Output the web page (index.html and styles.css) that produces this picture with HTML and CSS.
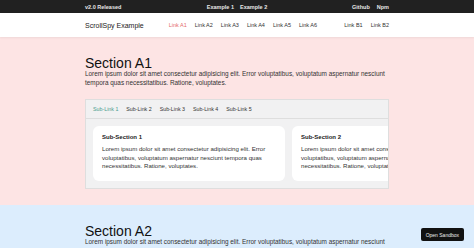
FILE: index.html
```html
<!DOCTYPE html>
<html lang="en">
<head>
    <meta charset="UTF-8">
    <meta name="viewport" content="width=device-width, initial-scale=1.0">
    <title>ScrollSpy Example</title>
    <link rel="stylesheet" href="styles.css">
</head>
<body>

    <div class="topbar">
        <div class="container topbar-inner">
            <div class="topbar-left">v2.0 Released</div>
            <div class="topbar-center">
                <a href="#">Example 1</a>
                <a href="#">Example 2</a>
            </div>
            <div class="topbar-right">
                <a href="#">Github</a>
                <a href="#">Npm</a>
            </div>
        </div>
    </div>

    <nav class="navbar">
        <div class="container navbar-inner">
            <span class="brand">ScrollSpy Example</span>
            <ul class="nav-links">
                <li><a href="#a1" class="active">Link A1</a></li>
                <li><a href="#a2">Link A2</a></li>
                <li><a href="#a3">Link A3</a></li>
                <li><a href="#a4">Link A4</a></li>
                <li><a href="#a5">Link A5</a></li>
                <li><a href="#a6">Link A6</a></li>
            </ul>
            <ul class="nav-links nav-right">
                <li><a href="#b1">Link B1</a></li>
                <li><a href="#b2">Link B2</a></li>
            </ul>
        </div>
    </nav>

    <section class="section section-pink" id="a1">
        <div class="container">
            <h1>Section A1</h1>
            <p>Lorem ipsum dolor sit amet consectetur adipisicing elit. Error voluptatibus, voluptatum aspernatur nesciunt tempora quas necessitatibus. Ratione, voluptates.</p>

            <div class="subspy">
                <ul class="sub-links">
                    <li><a href="#s1" class="active">Sub-Link 1</a></li>
                    <li><a href="#s2">Sub-Link 2</a></li>
                    <li><a href="#s3">Sub-Link 3</a></li>
                    <li><a href="#s4">Sub-Link 4</a></li>
                    <li><a href="#s5">Sub-Link 5</a></li>
                </ul>
                <div class="cards">
                    <div class="card" id="s1">
                        <h3>Sub-Section 1</h3>
                        <p>Lorem ipsum dolor sit amet consectetur adipisicing elit. Error voluptatibus, voluptatum aspernatur nesciunt tempora quas necessitatibus. Ratione, voluptates.</p>
                    </div>
                    <div class="card" id="s2">
                        <h3>Sub-Section 2</h3>
                        <p>Lorem ipsum dolor sit amet consectetur adipisicing elit. Error voluptatibus, voluptatum aspernatur nesciunt tempora quas necessitatibus. Ratione, voluptates.</p>
                    </div>
                </div>
            </div>
        </div>
    </section>

    <section class="section section-blue" id="a2">
        <div class="container">
            <h1>Section A2</h1>
            <p>Lorem ipsum dolor sit amet consectetur adipisicing elit. Error voluptatibus, voluptatum aspernatur nesciunt tempora quas necessitatibus. Ratione, voluptates.</p>
        </div>
    </section>

    <button class="sandbox-btn">Open Sandbox</button>

</body>
</html>
```

FILE: styles.css
```css
body {
    font-family: 'Liberation Sans', Arial, Helvetica, sans-serif;
    margin: 0;
    color: #222;
    background-color: #dcedfd;
}
a {
    color: inherit;
    text-decoration: none;
}
ul {
    list-style: none;
    margin: 0;
    padding: 0;
}
.container {
    width: 304px;
    margin: 0 auto;
}
.topbar {
    background-color: #212121;
    color: #e6e6e6;
    font-size: 5.5px;
    font-weight: bold;
    height: 13px;
}
.topbar-inner {
    display: grid;
    grid-template-columns: 1fr auto 1fr;
    align-items: center;
    height: 100%;
}
.topbar-center {
    display: flex;
    gap: 6px;
}
.topbar-right {
    display: flex;
    gap: 7px;
    justify-content: flex-end;
}
.navbar {
    background-color: white;
    height: 24px;
    box-shadow: 0 1px 2px rgba(0, 0, 0, 0.06);
    position: relative;
}
.navbar-inner {
    display: flex;
    align-items: center;
    height: 100%;
}
.brand {
    font-size: 7px;
    color: #222;
}
.nav-links {
    display: flex;
    gap: 8px;
    margin-left: 25px;
    font-size: 5.5px;
    color: #333;
}
.nav-links .active {
    color: #e46a6a;
}
.nav-right {
    margin-left: auto;
}
.section {
    padding: 19px 0 16px;
}
.section-pink {
    background-color: #fde4e4;
}
.section-blue {
    background-color: #dcedfd;
}
h1 {
    font-size: 14px;
    font-weight: normal;
    line-height: 14px;
    margin: 0;
    color: #111;
}
.section p {
    font-size: 6.4px;
    line-height: 8.7px;
    margin: 0;
    color: #333;
}
.subspy {
    margin-top: 12px;
    background-color: #f1f1f2;
    border: 1px solid #dedede;
    overflow: hidden;
}
.sub-links {
    display: flex;
    gap: 8px;
    height: 18px;
    align-items: center;
    padding: 0 7px;
    font-size: 5.3px;
    border-bottom: 1px solid #dedede;
    color: #333;
}
.sub-links .active {
    color: #4a9c8e;
}
.cards {
    display: flex;
    gap: 7px;
    padding: 7px 7px 7px;
}
.card {
    flex: 0 0 192px;
    box-sizing: border-box;
    height: 55px;
    background-color: white;
    border-radius: 6px;
    padding: 8px 9px;
}
.card h3 {
    font-size: 6px;
    margin: 0 0 5px;
    color: #222;
}
.section .card p {
    font-size: 6.1px;
    line-height: 8.5px;
    color: #333;
}
.sandbox-btn {
    position: fixed;
    right: 10px;
    bottom: 7px;
    background-color: #111;
    color: #eee;
    border: none;
    border-radius: 2px;
    font-family: 'Liberation Sans', Arial, sans-serif;
    font-size: 5px;
    padding: 0 5px;
    height: 13px;
    white-space: nowrap;
}
```
